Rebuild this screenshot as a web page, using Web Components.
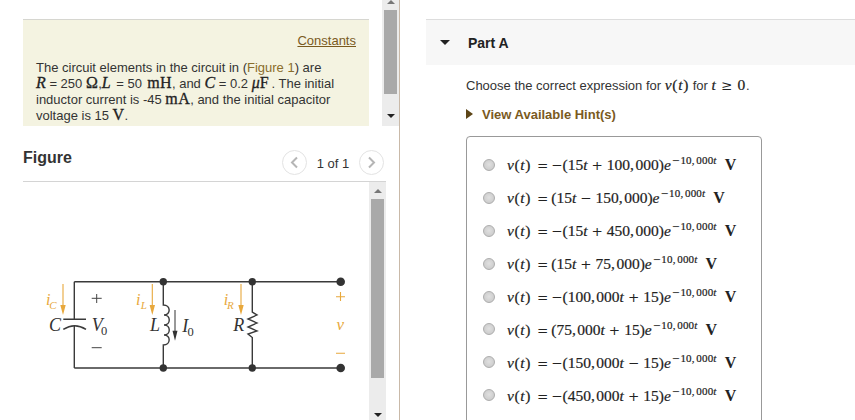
<!DOCTYPE html>
<html>
<head>
<meta charset="utf-8">
<title>Part A</title>
<style>
    html, body { margin: 0; height: 100%; overflow: hidden; background: #fff; }
</style>
</head>
<body>
<quiz-page></quiz-page>
<script>
//Fórmulas de las opciones: [signo, contenido del paréntesis]
const OP = s => `<span class=op>${s}</span>`;
const NUM = s => s.replace(',', '<span class=c>,</span>');
const OPTIONS = [
    [true, `15<i>t</i>${OP('+')}${NUM('100,000')}`],
    [false, `15<i>t</i>${OP('\u2212')}${NUM('150,000')}`],
    [true, `15<i>t</i>${OP('+')}${NUM('450,000')}`],
    [false, `15<i>t</i>${OP('+')}${NUM('75,000')}`],
    [true, `${NUM('100,000')}<i>t</i>${OP('+')}15`],
    [false, `${NUM('75,000')}<i>t</i>${OP('+')}15`],
    [true, `${NUM('150,000')}<i>t</i>${OP('\u2212')}15`],
    [true, `${NUM('450,000')}<i>t</i>${OP('+')}15`]
];

class ScrollBar extends HTMLElement {
    constructor(){
        super();
        this.attachShadow({ mode : 'open' });
        this.shadowRoot.innerHTML = `
            <style>
                :host{ display:flex; flex-direction:column; align-items:center; width:17px; background:#ececec; flex:none; }
                .arrow{ width:0; height:0; border-left:4px solid transparent; border-right:4px solid transparent; flex:none; }
                .up{ border-bottom:4px solid #777; }
                .down{ border-top:4px solid #222; margin-top:auto; }
                .thumb{ width:13px; background:#a9a9a9; flex:none; }
            </style>
            <span class="arrow up" style="margin-top:${this.getAttribute('up-top')}px"></span>
            <span class="thumb" style="margin-top:${this.getAttribute('gap')}px;height:${this.getAttribute('thumb')}px"></span>
            <span class="arrow down" style="margin-bottom:${this.getAttribute('down-bottom')}px"></span>`;
    }
}

class InfoBox extends HTMLElement {
    constructor(){
        super();
        this.attachShadow({ mode : 'open' });
        this.shadowRoot.innerHTML = `
            <style>
                :host{ display:block; width:346px; height:107px; box-sizing:border-box; background:#f4f3e1; border-top:1px solid #d6d6d0; padding:14px 13px 0 13px; font:13px/16px "Liberation Sans", Arial, sans-serif; color:#333; }
                .constants{ text-align:right; color:#7a5a1e; text-decoration:underline; height:26px; line-height:14px; }
                span.fig{ color:#8a6d2b; }
                .b, i{ font-family:"Liberation Serif", serif; font-size:16px; line-height:0; -webkit-text-stroke:.3px #222; color:#222; }
                .b{ letter-spacing:.4px; }
                .l{ margin-right:2px; }
                .h{ margin-left:1.500px; }
                .f{ margin-right:2.500px; }
            </style>
            <div class="constants">Constants</div>
            <div>The circuit elements in the circuit in (<span class="fig">Figure 1</span>) are<br>
            <i>R</i> = 250 <span class="b">\u03a9</span>,<i class="l">L</i> = 50 <span class="b h">mH</span>, and <i>C</i> = 0.2 <i>\u03bc</i><span class="b f">F</span>. The initial<br>
            inductor current is -45 <span class="b">mA</span>, and the initial capacitor<br>
            voltage is 15 <span class="b">V</span>.</div>`;
    }
}

class FigurePager extends HTMLElement {
    constructor(){
        super();
        this.attachShadow({ mode : 'open' });
        this.shadowRoot.innerHTML = `
            <style>
                :host{ display:flex; align-items:flex-start; font:13px "Liberation Sans", Arial, sans-serif; color:#333; }
                .btn{ width:25px; height:25px; box-sizing:border-box; border:1px solid #e3e3e3; border-radius:50%; display:flex; align-items:center; justify-content:center; }
                .txt{ width:52px; text-align:center; line-height:25px; padding-top:1px; }
            </style>
            <span class="btn"><svg width="9" height="13" viewBox="0 0 9 13"><path d="M7 1.500 2 6.500 7 11.500" fill="none" stroke="#b5b5b5" stroke-width="2"/></svg></span>
            <span class="txt">1 of 1</span>
            <span class="btn"><svg width="9" height="13" viewBox="0 0 9 13"><path d="M2 1.500 7 6.500 2 11.500" fill="none" stroke="#b5b5b5" stroke-width="2"/></svg></span>`;
    }
}

class CircuitFigure extends HTMLElement {
    constructor(){
        super();
        this.attachShadow({ mode : 'open' });
        this.shadowRoot.innerHTML = `
            <style>
                :host{ display:block; width:346px; height:238px; flex:none; }
                svg{ display:block; }
                text{ font-family:"Liberation Serif", serif; font-style:italic; }
                .w{ fill:none; stroke:#3a3a3a; stroke-width:1.400; }
                .ol{ stroke:#e8a83c; stroke-width:1.100; fill:none; }
                .o{ fill:#e8a83c; }
                .k{ fill:#333; }
                .n{ font-style:normal; }
            </style>
            <!-- el viewBox usa las coordenadas de la captura -->
            <svg width="346" height="238" viewBox="23 182 346 238">
                <path class="w" d="M74.300 281.700H340.700M74.300 368H340.700M74.300 281.700V319.300M74.300 325.700V368"/>
                <path class="w" d="M63.300 319.300H86M63.300 329.300Q74.500 322 86 329.300" style="stroke-width:1.500"/>
                <path class="w" d="M163.300 281.700V305C171 305 171 315 164 315C171 315 171 325 164 325C171 325 171 335 164 335C171 335 171 345 163.300 345V368"/>
                <path class="w" d="M252.300 281.700V312L257 315 248 319 257 323 248 327 257 331 248 334 252.300 337.500V368"/>
                <g class="k"><circle cx="163.300" cy="281.700" r="3.700"/><circle cx="252.300" cy="281.700" r="3.700"/><circle cx="340.700" cy="281.700" r="4.300"/><circle cx="163.300" cy="368" r="3.700"/><circle cx="252.300" cy="368" r="3.700"/><circle cx="340.700" cy="368" r="4.300"/></g>
                <path class="ol" d="M63 284V306M152.300 284V306M241 284V306"/>
                <path class="o" d="M60.300 305H65.700L63 315ZM149.600 305H155L152.300 315ZM238.300 305H243.700L241 315Z"/>
                <path d="M175 310V332" fill="none" stroke="#333" stroke-width="1"/><path class="k" d="M172.500 330.700H177.500L175 340.700Z"/>
                <g class="o" font-size="16"><text x="46" y="305">i</text><text x="136" y="305">i</text><text x="223.700" y="305">i</text></g>
                <g class="o" font-size="11"><text x="49.300" y="309.300">C</text><text x="140.700" y="309.300">L</text><text x="227" y="309.300">R</text></g>
                <text class="o" x="336.500" y="330" font-size="17">v</text>
                <path class="ol" d="M336 296.700H345M340.500 292V301M336 353.300H345"/>
                <g class="k" font-size="18"><text x="49" y="330.700">C</text><text x="91.700" y="330.700">V</text><text x="150" y="331">L</text><text x="182.300" y="331.500">I</text><text x="233.300" y="331">R</text></g>
                <g class="k" font-size="12.500"><text class="n" x="101" y="335">0</text><text class="n" x="187.500" y="335.500">0</text></g>
                <path d="M91.700 298.300H101.700M96.700 294V303M91.700 347.700H101.700" fill="none" stroke="#444" stroke-width="1"/>
            </svg>`;
    }
}

class AnswerOption extends HTMLElement {
    constructor(){
        super();
        this.attachShadow({ mode : 'open' });
        this.shadowRoot.innerHTML = `
            <style>
                :host{ display:flex; align-items:center; height:32.900px; font:15.500px "Liberation Serif", serif; color:#222; white-space:nowrap; -webkit-text-stroke:.2px #222; }
                .radio{ width:12px; height:12px; box-sizing:border-box; border-radius:50%; border:1px solid #adadad; background:radial-gradient(circle at 50% 45%, #e0e0e0, #c6c6c6); margin-right:12px; flex:none; -webkit-text-stroke:0; }
                i{ font-style:italic; }
                .vt{ letter-spacing:.6px; }
                .op{ font:13.500px "DejaVu Serif", serif; -webkit-text-stroke:0; margin:0 4px; }
                .eq{ margin:0 3px 0 6px; }
                .s{ font:13.500px "DejaVu Serif", serif; -webkit-text-stroke:0; }
                .c{ margin-right:1.500px; }
                .e{ margin-right:1px; }
                sup{ font-size:11px; line-height:0; vertical-align:6px; letter-spacing:.2px; }
                sup .m{ font:10px "DejaVu Serif", serif; -webkit-text-stroke:0; }
                .v{ font-weight:bold; font-size:16px; -webkit-text-stroke:0; margin-left:8px; }
            </style>
            <span class="radio"></span>
            <span id="formula"></span>`;
    }
    connectedCallback(){
        //El signo y el contenido se pasan por propiedades, llevan markup
        const sign = this.negative ? '<span class="s">\u2212</span>' : '';
        this.shadowRoot.getElementById('formula').innerHTML =
            `<span class="vt"><i>v</i>(<i>t</i>)</span><span class="op eq">=</span>${sign}(${this.body})<i class="e">e</i><sup><span class="m">\u2212</span>10<span class="c">,</span>000<i>t</i></sup><span class="v">V</span>`;
    }
}

class PartPanel extends HTMLElement {
    constructor(){
        super();
        this.attachShadow({ mode : 'open' });
        this.shadowRoot.innerHTML = `
            <style>
                :host{ display:block; padding:19px 0 0 26px; font:13px "Liberation Sans", Arial, sans-serif; color:#333; }
                header{ display:flex; align-items:center; height:46px; box-sizing:border-box; background:#f7f7f7; border-top:1px solid #ddd; padding-left:14px; font-weight:bold; font-size:14px; color:#222; }
                .tri{ width:0; height:0; border-left:5px solid transparent; border-right:5px solid transparent; border-top:5px solid #222; margin-right:18px; }
                .q{ margin:9px 0 0 40px; height:24px; line-height:24px; }
                .m{ font:15.500px/1 "Liberation Serif", serif; color:#222; -webkit-text-stroke:.2px #222; letter-spacing:.7px; }
                .ge{ font:13.500px/1 "DejaVu Serif", serif; -webkit-text-stroke:0; margin:0 4.500px; }
                .hint{ display:flex; align-items:center; margin:6px 0 0 40px; height:20px; font-weight:bold; color:#7a5a1e; }
                .hint b{ width:0; height:0; border-top:5px solid transparent; border-bottom:5px solid transparent; border-left:7px solid #5d4517; margin-right:9px; }
                .box{ margin:12px 0 0 40px; width:296px; height:300px; box-sizing:border-box; border:1px solid #999; border-radius:4px; padding:11.500px 0 0 16px; }
            </style>
            <header><span class="tri"></span>Part A</header>
            <div class="q">Choose the correct expression for <span class="m"><i>v</i>(<i>t</i>)</span> for <span class="m"><i>t</i><span class="ge">\u2265</span>0</span>.</div>
            <div class="hint"><b></b>View Available Hint(s)</div>
            <div class="box" id="box"></div>`;
        const box = this.shadowRoot.getElementById('box');
        OPTIONS.forEach(o => {
            const option = document.createElement('answer-option');
            option.negative = o[0];
            option.body = o[1];
            box.appendChild(option);
        });
    }
}

class QuizPage extends HTMLElement {
    constructor(){
        super();
        this.attachShadow({ mode : 'open' });
        this.shadowRoot.innerHTML = `
            <style>
                :host{ display:flex; width:855px; height:420px; overflow:hidden; }
                .left{ width:400px; height:420px; box-sizing:border-box; border-right:1px solid #c9b9a8; flex:none; }
                .top{ display:flex; height:126px; padding-left:23px; box-sizing:border-box; }
                info-box{ margin-top:19px; }
                .top scroll-bar{ margin-left:13px; }
                .head{ display:flex; height:55px; box-sizing:border-box; padding:24px 15px 0 23px; }
                h2{ margin:-1px 0 0; font:bold 16px "Liberation Sans", Arial, sans-serif; color:#333; flex:1; }
                .fig{ display:flex; width:363px; height:238px; margin-left:23px; border-top:1px solid #d4d4d4; }
                .right{ flex:1; min-width:0; }
            </style>
            <div class="left">
                <div class="top">
                    <info-box></info-box>
                    <scroll-bar up-top="0" gap="6" thumb="84" down-bottom="8"></scroll-bar>
                </div>
                <div class="head"><h2>Figure</h2><figure-pager></figure-pager></div>
                <div class="fig">
                    <circuit-figure></circuit-figure>
                    <scroll-bar up-top="7" gap="6" thumb="179" down-bottom="3"></scroll-bar>
                </div>
            </div>
            <div class="right"><part-panel></part-panel></div>`;
    }
}

customElements.define('scroll-bar', ScrollBar);
customElements.define('info-box', InfoBox);
customElements.define('figure-pager', FigurePager);
customElements.define('circuit-figure', CircuitFigure);
customElements.define('answer-option', AnswerOption);
customElements.define('part-panel', PartPanel);
customElements.define('quiz-page', QuizPage);
</script>
</body>
</html>
